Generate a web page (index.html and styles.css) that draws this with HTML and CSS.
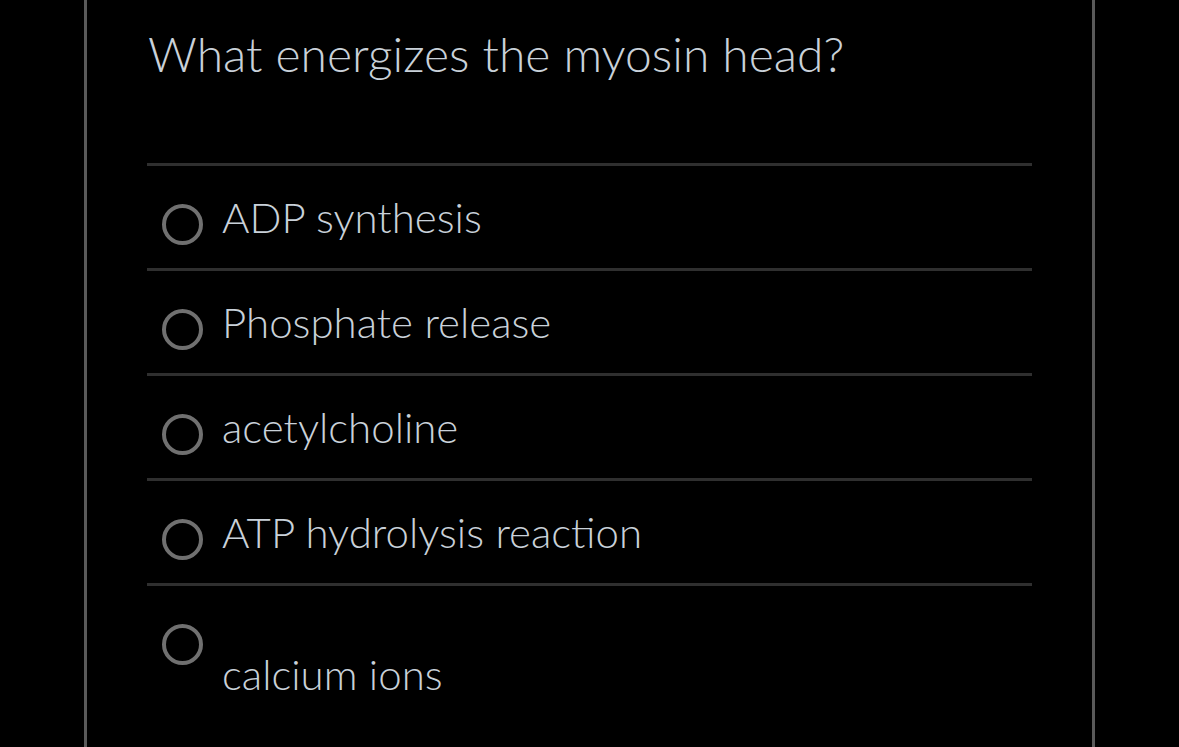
FILE: index.html
```html
<!DOCTYPE html>
<html lang="en">
<head>
<meta charset="utf-8">
<title>Quiz question</title>
<link rel="stylesheet" href="styles.css">
</head>
<body>
<div class="frame">
  <div class="question">
    <h1 class="title">What energizes the myosin head?</h1>
    <ul class="options">
      <li class="option"><span class="radio"></span><span class="label">ADP synthesis</span></li>
      <li class="option"><span class="radio"></span><span class="label">Phosphate release</span></li>
      <li class="option"><span class="radio"></span><span class="label">acetylcholine</span></li>
      <li class="option"><span class="radio"></span><span class="label">ATP hydrolysis reaction</span></li>
      <li class="option option-wrap"><span class="radio"></span><span class="label">calcium ions</span></li>
    </ul>
  </div>
</div>
</body>
</html>
```

FILE: styles.css
```css
html, body {
  margin: 0;
  padding: 0;
  background: #000;
  height: 100%;
  overflow: hidden;
}
body {
  font-family: "Lato Light", Lato, "Open Sans", sans-serif;
  font-weight: 300;
  color: #c9d1d9;
}
.frame {
  margin-left: 84px;
  width: 1011px;
  height: 100%;
  border-left: 3px solid #5a5a5a;
  border-right: 3px solid #5a5a5a;
  padding: 0 60px 0 60px;
  box-sizing: border-box;
}
.title {
  margin: 0;
  padding-top: 25px;
  padding-left: 1px;
  font-size: 48px;
  font-weight: 300;
  line-height: 1.2;
  height: 163px;
  box-sizing: border-box;
}
.options {
  list-style: none;
  margin: 0;
  padding: 0;
}
.option {
  display: flex;
  align-items: flex-start;
  border-top: 3px solid #2f2f2f;
  height: 105px;
  box-sizing: border-box;
  padding: 26px 0 0 15px;
  font-size: 42px;
  line-height: 1.2;
}
.radio {
  flex: none;
  width: 41px;
  height: 41px;
  box-sizing: border-box;
  border: 4px solid #707070;
  border-radius: 50%;
  margin-top: 12px;
  margin-right: 19px;
}
.option-wrap {
  flex-wrap: wrap;
  height: auto;
}
.option-wrap .label {
  flex-basis: 100%;
  padding-left: 60px;
  margin-top: -16px;
}
```
